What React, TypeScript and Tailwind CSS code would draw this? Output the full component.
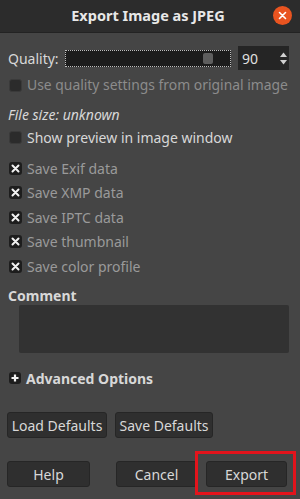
import React from "react";

const font = { fontFamily: '"Noto Sans", "DejaVu Sans", sans-serif' };

function XBox() {
  return (
    <span className="w-[13px] h-[13px] rounded-[3px] bg-[#1d1d1d] flex items-center justify-center shrink-0">
      <svg width="9" height="9" viewBox="0 0 9 9">
        <path d="M1.5 1.5 L7.5 7.5 M7.5 1.5 L1.5 7.5" stroke="#f2f2f2" strokeWidth="2" strokeLinecap="round" />
      </svg>
    </span>
  );
}

function EmptyBox() {
  return <span className="w-[13px] h-[13px] rounded-[3px] bg-[#2b2b2b] border border-[#3a3a3a] shrink-0" />;
}

function Btn({ children, w }: { children: React.ReactNode; w: string }) {
  return (
    <div className={`${w} h-[26px] rounded-[3px] bg-[#2f2f2f] border border-[#262626] flex items-center justify-center text-[14px] text-[#d8d8d8]`}>
      {children}
    </div>
  );
}

export default function App() {
  const checks = ["Save Exif data", "Save XMP data", "Save IPTC data", "Save thumbnail", "Save color profile"];
  return (
    <div className="w-[300px] h-[499px] bg-[#454545] flex flex-col overflow-hidden" style={font}>
      <div className="h-[33px] bg-[#2c2c2c] border-b border-[#232323] flex items-center relative shrink-0">
        <div className="flex-1 text-center text-[14.5px] font-bold text-[#e8e8e8] pr-[4px]">Export Image as JPEG</div>
        <div className="absolute right-[8px] top-[6px] w-[19px] h-[19px] rounded-full bg-[#e95420] flex items-center justify-center">
          <svg width="9" height="9" viewBox="0 0 9 9">
            <path d="M1.5 1.5 L7.5 7.5 M7.5 1.5 L1.5 7.5" stroke="#fff" strokeWidth="1.6" strokeLinecap="round" />
          </svg>
        </div>
      </div>

      <div className="flex items-center pl-[8px] pr-[11px] mt-[13px] h-[24px]">
        <span className="text-[14px] text-[#d8d8d8] w-[57px]">Quality:</span>
        <div className="w-[166px] h-[17px] bg-[#1c1c1c] border border-dotted border-[#bdbdbd] relative">
          <div className="absolute left-[137px] top-[2px] w-[10px] h-[11px] rounded-[2px] bg-[#5e5e5e]" />
        </div>
        <div className="ml-[7px] w-[51px] h-[24px] bg-[#252525] flex items-center justify-between pl-[4px] pr-[2px]">
          <span className="text-[14px] text-[#e0e0e0]">90</span>
          <div className="flex flex-col items-center gap-[3px]">
            <svg width="7" height="5" viewBox="0 0 7 5"><path d="M0 5 L3.5 0.5 L7 5 Z" fill="#d0d0d0" /></svg>
            <svg width="7" height="5" viewBox="0 0 7 5"><path d="M0 0 L3.5 4.5 L7 0 Z" fill="#d0d0d0" /></svg>
          </div>
        </div>
      </div>

      <div className="flex items-center gap-[5px] pl-[9px] mt-[7px] h-[16px]">
        <EmptyBox />
        <span className="text-[13.9px] text-[#8c8c8c] whitespace-nowrap">Use quality settings from original image</span>
      </div>

      <div className="pl-[8px] mt-[14px] text-[14px] italic text-[#d8d8d8] h-[16px] leading-[16px]">File size: unknown</div>

      <div className="flex items-center gap-[5px] pl-[9px] mt-[6px] h-[16px]">
        <EmptyBox />
        <span className="text-[14px] text-[#d8d8d8]">Show preview in image window</span>
      </div>

      <div className="flex flex-col gap-[8.5px] mt-[15px]">
        {checks.map((c) => (
          <div key={c} className="flex items-center gap-[5px] pl-[9px] h-[16px]">
            <XBox />
            <span className="text-[14px] text-[#9a9a9a]">{c}</span>
          </div>
        ))}
      </div>

      <div className="pl-[8px] mt-[14px] text-[14px] font-bold text-[#d8d8d8] h-[16px] leading-[16px]">Comment</div>
      <div className="ml-[19px] mr-[11px] mt-[1px] h-[48px] bg-[#323232] rounded-[2px]" />

      <div className="flex items-center gap-[5px] pl-[9px] mt-[17px] h-[16px]">
        <span className="w-[12px] h-[12px] rounded-[3px] bg-[#1d1d1d] flex items-center justify-center">
          <svg width="8" height="8" viewBox="0 0 8 8"><path d="M4 0.5 V7.5 M0.5 4 H7.5" stroke="#f2f2f2" strokeWidth="2.2" /></svg>
        </span>
        <span className="text-[14px] font-bold text-[#d8d8d8]">Advanced Options</span>
      </div>

      <div className="flex gap-[8px] pl-[7px] mt-[26px]">
        <Btn w="w-[100px]">Load Defaults</Btn>
        <Btn w="w-[98px]">Save Defaults</Btn>
      </div>

      <div className="flex pl-[7px] mt-[23px] items-center">
        <Btn w="w-[83px]">Help</Btn>
        <div className="ml-[26px]"><Btn w="w-[81px]">Cancel</Btn></div>
        <div className="ml-[-2px] border-[3px] border-[#e3141c] pl-[8px] pr-[6px] pt-[7px] pb-[5px] -mt-[10px] -mb-[8px]">
          <Btn w="w-[81px]">Export</Btn>
        </div>
      </div>
    </div>
  );
}
